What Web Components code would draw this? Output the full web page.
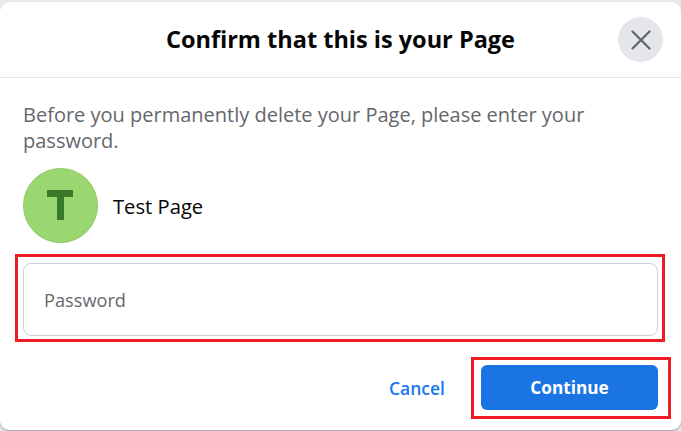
<!DOCTYPE html>
<html>
<head>
<meta charset="utf-8">
<title>Confirm</title>
<style>
    html, body { margin: 0; height: 100%; }
    body { background: #e9eaec; font-family: "Open Sans", "Noto Sans", sans-serif; overflow: hidden; }
</style>
</head>
<body>
<confirm-dialog heading="Confirm that this is your Page">
    <page-row name="Test Page" initial="T"></page-row>
</confirm-dialog>

<script>
const dialogTemplate = document.createElement('template');
dialogTemplate.innerHTML = `
    <style>
        :host {
            background: #fff;
            border-radius: 9px;
            box-shadow: 0 1px 2px rgba(0, 0, 0, 0.35);
            box-sizing: border-box;
            display: block;
            height: 428px;
            margin-top: 2px;
            position: relative;
        }

        header {
            align-items: center;
            border-bottom: 1px solid #e4e6eb;
            box-sizing: border-box;
            display: flex;
            height: 76px;
            justify-content: center;
            padding-bottom: 1px;
            position: relative;
        }

        h1 {
            color: #050505;
            font-size: 23.5px;
            font-weight: 700;
            margin: 0;
        }

        .close {
            align-items: center;
            background: #e4e6eb;
            border-radius: 50%;
            display: flex;
            height: 45px;
            justify-content: center;
            position: absolute;
            right: 18px;
            top: 15px;
            width: 45px;
        }

        .content {
            padding: 24px 23px 0;
        }

        p {
            color: #65676b;
            font-size: 20px;
            line-height: 26px;
            margin: 0 0 14px;
        }

        .field {
            align-items: center;
            border: 1px solid #ced0d4;
            border-radius: 8px;
            box-sizing: border-box;
            color: #65676b;
            display: flex;
            font-size: 18.2px;
            height: 73px;
            margin-top: 20px;
            padding-left: 20px;
            padding-top: 1px;
        }

        .actions {
            align-items: center;
            display: flex;
            gap: 36px;
            justify-content: flex-end;
            margin-top: 29px;
        }

        .cancel {
            color: #1877f2;
            font-size: 17.5px;
            font-weight: 600;
        }

        .continue {
            align-items: center;
            background: #1b74e4;
            border-radius: 6px;
            color: #fff;
            display: flex;
            font-size: 17.2px;
            font-weight: 700;
            height: 45px;
            justify-content: center;
            width: 177px;
        }

        .mark {
            border: 3px solid #ed1c24;
            box-sizing: border-box;
            position: absolute;
        }

        .mark.one {
            height: 88px;
            left: 15px;
            top: 252px;
            width: 650px;
        }

        .mark.two {
            height: 62px;
            left: 471px;
            top: 355px;
            width: 200px;
        }
    </style>

    <header>
        <h1></h1>
        <div class="close">
            <svg width="22" height="22" viewBox="0 0 22 22" fill="none" stroke="#606770" stroke-width="2.3" stroke-linecap="round">
                <path d="M2.5 2.5 L19.5 19.5 M19.5 2.5 L2.5 19.5"></path>
            </svg>
        </div>
    </header>

    <div class="content">
        <p>Before you permanently delete your Page, please enter your password.</p>
        <slot></slot>
        <div class="field">Password</div>
        <div class="actions">
            <span class="cancel">Cancel</span>
            <span class="continue">Continue</span>
        </div>
    </div>

    <div class="mark one"></div>
    <div class="mark two"></div>
`;

class ConfirmDialog extends HTMLElement{
    constructor(){
        super();
        this.attachShadow({mode: 'open'});
        this.shadowRoot.appendChild(dialogTemplate.content.cloneNode(true));
        this.shadowRoot.querySelector('h1').innerText = this.getAttribute('heading');
    }
}

const rowTemplate = document.createElement('template');
rowTemplate.innerHTML = `
    <style>
        :host {
            align-items: center;
            display: flex;
            gap: 15px;
        }

        .avatar {
            flex: none;
            height: 75px;
            width: 75px;
        }

        span {
            color: #050505;
            font-size: 20.2px;
            font-weight: 500;
        }
    </style>

    <svg class="avatar" viewBox="0 0 75 75">
        <circle cx="37.5" cy="37.5" r="37" fill="#9bd770" stroke="#8cc765" stroke-width="1"></circle>
        <path d="M24 22 H50 V29 H41 V52 H34 V29 H24 Z" fill="#387a2a"></path>
    </svg>
    <span></span>
`;

class PageRow extends HTMLElement{
    constructor(){
        super();
        this.attachShadow({mode: 'open'});
        this.shadowRoot.appendChild(rowTemplate.content.cloneNode(true));
        this.shadowRoot.querySelector('span').innerText = this.getAttribute('name');
    }
}

window.customElements.define('page-row', PageRow);
window.customElements.define('confirm-dialog', ConfirmDialog);
</script>
</body>
</html>
